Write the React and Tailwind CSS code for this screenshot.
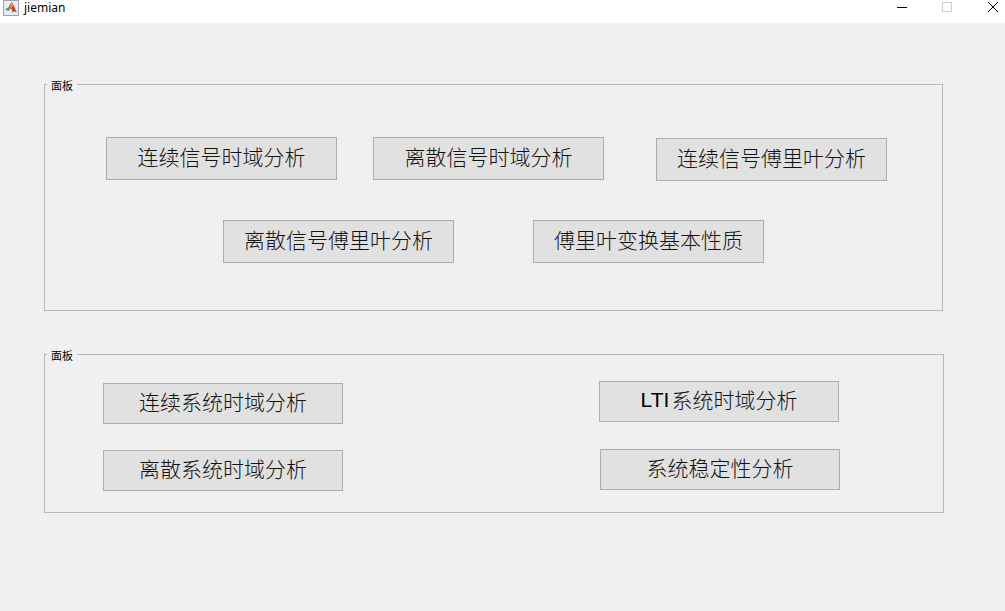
const cjk = "font-['Noto_Sans_CJK_SC','Noto_Sans_CJK_JP',sans-serif]"

function MatlabIcon() {
  return (
    <span className="flex h-[16px] w-[16px] items-center justify-center border border-[#9aa4b0] bg-[#e8eef5]">
      <svg width="14" height="14" viewBox="0 0 14 14">
        <path d="M1 8.5 L4.5 6 L6.5 7.5 L4.5 10 Z" fill="#4a90c8" />
        <path d="M4.5 6 L7.5 1 L9.5 4 L6.5 8 Z" fill="#e0662a" />
        <path d="M7.5 1 C9.5 3 11 8 13 11.5 C11 10.5 9.5 10 8.5 11.5 C8 9 7.5 7 6.5 7.5 Z" fill="#c9451c" />
        <path d="M7.5 1 L9 4.5 L7.5 7 L6.5 7.5 Z" fill="#f2a33a" />
      </svg>
    </span>
  )
}

function Btn({ className = '', children }) {
  return (
    <button className={`flex shrink-0 items-center justify-center border border-[#adadad] bg-[#e1e1e1] pb-[4px] text-[21px] leading-none font-light text-[#111] ${cjk} ${className}`}>
      {children}
    </button>
  )
}

function Panel({ className = '', children }) {
  return (
    <div className={`relative border border-[#b8b8b8] ${className}`}>
      <span className={`absolute top-[-6px] left-[2px] bg-[#f0f0f0] px-[4px] text-[11px] leading-[13px] text-black ${cjk}`}>
        面板
      </span>
      {children}
    </div>
  )
}

export default function App() {
  return (
    <div className="flex h-[611px] w-[1005px] flex-col overflow-hidden bg-[#f0f0f0]">
      <div className="flex h-[23px] items-start bg-white">
        <div className="ml-[3px] flex h-[16px] items-center gap-[5px]">
          <MatlabIcon />
          <span className="font-['Noto_Sans','Liberation_Sans',sans-serif] text-[12px] leading-none text-black">jiemian</span>
        </div>
        <div className="ml-auto flex">
          <svg className="mr-[34px] mt-[2px]" width="11" height="10" viewBox="0 0 11 10">
            <path d="M0 5.5 H10" stroke="#000" strokeWidth="1" />
          </svg>
          <span className="mr-[35px] mt-[2px] h-[10px] w-[10px] border border-[#cfcfcf]" />
          <svg className="mr-[6px] mt-[1px]" width="12" height="12" viewBox="0 0 12 12">
            <path d="M1 1 L11 11 M11 1 L1 11" stroke="#000" strokeWidth="1" />
          </svg>
        </div>
      </div>

      <div className="flex flex-col pt-[61px] pl-[44px]">
        <Panel className="h-[227px] w-[899px]">
          <div className="mt-[52px] flex items-start">
            <Btn className="ml-[61px] h-[43px] w-[231px]">连续信号时域分析</Btn>
            <Btn className="ml-[36px] h-[43px] w-[231px]">离散信号时域分析</Btn>
            <Btn className="mt-[1px] ml-[52px] h-[43px] w-[231px]">连续信号傅里叶分析</Btn>
          </div>
          <div className="mt-[39px] flex items-start">
            <Btn className="ml-[178px] h-[43px] w-[231px]">离散信号傅里叶分析</Btn>
            <Btn className="ml-[79px] h-[43px] w-[231px]">傅里叶变换基本性质</Btn>
          </div>
        </Panel>

        <Panel className="mt-[43px] h-[159px] w-[900px]">
          <div className="flex">
            <div className="mt-[28px] ml-[58px] flex flex-col gap-[26px]">
              <Btn className="h-[41px] w-[240px]">连续系统时域分析</Btn>
              <Btn className="h-[41px] w-[240px]">离散系统时域分析</Btn>
            </div>
            <div className="mt-[26px] ml-[256px] flex flex-col gap-[27px]">
              <Btn className="h-[41px] w-[240px]">
                <span className="mr-[2px] font-['Liberation_Sans',sans-serif] font-normal text-black">LTI</span>
                系统时域分析
              </Btn>
              <Btn className="ml-[1px] h-[41px] w-[240px]">系统稳定性分析</Btn>
            </div>
          </div>
        </Panel>
      </div>
    </div>
  )
}
